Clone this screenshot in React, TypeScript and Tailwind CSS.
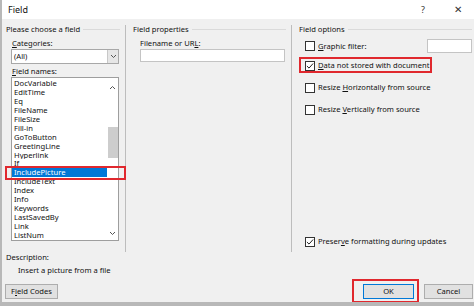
import React from "react";

const items = [
  "DocVariable",
  "EditTime",
  "Eq",
  "FileName",
  "FileSize",
  "Fill-in",
  "GoToButton",
  "GreetingLine",
  "Hyperlink",
  "If",
  "IncludePicture",
  "IncludeText",
  "Index",
  "Info",
  "Keywords",
  "LastSavedBy",
  "Link",
  "ListNum",
];

function Check({ checked }: { checked?: boolean }) {
  return (
    <span className="w-[10px] h-[10px] border border-[#333333] bg-white flex items-center justify-center shrink-0">
      {checked && (
        <svg width="8" height="8" viewBox="0 0 8 8">
          <path d="M0.9 4 L3 6.1 L7.1 1.5" stroke="#222" strokeWidth="1" fill="none" />
        </svg>
      )}
    </span>
  );
}

function Heading({ children }: { children: React.ReactNode }) {
  return (
    <div className="flex items-center h-[9px] gap-[3px]">
      <span className="whitespace-nowrap">{children}</span>
      <div className="flex-1 h-px bg-[#dadada]" />
    </div>
  );
}

function Chevron({ up }: { up?: boolean }) {
  return (
    <svg width="7" height="5" viewBox="0 0 7 5">
      <path
        d={up ? "M1 4 L3.5 1.5 L6 4" : "M1 1 L3.5 3.5 L6 1"}
        stroke="#555"
        strokeWidth="1"
        fill="none"
      />
    </svg>
  );
}

export default function App() {
  return (
    <div className="relative w-[474px] h-[306px] flex flex-col bg-[#f0f0f0] border-l-2 border-b-4 border-[#b8b8b8] font-['Noto_Sans',sans-serif] text-[7.6px] leading-[9px] text-[#111] overflow-hidden">
      {/* title bar */}
      <div className="h-[19px] bg-white flex items-center shrink-0">
        <span className="ml-[6px] text-[9px]">Field</span>
        <div className="flex-1" />
        <span className="text-[9px] text-[#333] mr-[29px]">?</span>
        <span className="text-[10px] text-[#333] mr-[12px]">✕</span>
      </div>

      {/* main columns */}
      <div className="flex mt-[6px] h-[227px] shrink-0">
        {/* column 1 */}
        <div className="w-[124px] border-r border-[#bdbdbd] flex flex-col pl-[4px] pr-[5px]">
          <Heading>Please choose a field</Heading>
          <div className="mt-[5px] ml-[6px]">
            <u>C</u>ategories:
          </div>
          <div className="mt-[1px] ml-[5px] w-[108px] h-[15px] bg-white border border-[#a8a8a8] flex items-center">
            <span className="ml-[2px] flex-1">(All)</span>
            <span className="w-[11px] h-full bg-[#e6e6e6] border-l border-[#c8c8c8] flex items-center justify-center">
              <Chevron />
            </span>
          </div>
          <div className="mt-[3px] ml-[6px]">
            <u>F</u>ield names:
          </div>
          <div className="mt-[1px] ml-[5px] w-[108px] h-[164px] bg-white border border-[#9e9e9e] flex">
            <div className="flex-1 flex flex-col pt-[1px]">
              {items.map((it) => (
                <div
                  key={it}
                  className={
                    "h-[9px] pl-[2px] leading-[9px] overflow-hidden " +
                    (it === "IncludePicture" ? "bg-[#0078d7] text-white" : "")
                  }
                >
                  {it}
                </div>
              ))}
            </div>
            <div className="w-[11px] flex flex-col items-center bg-white">
              <div className="h-[12px] flex items-center justify-center mt-[3px]">
                <Chevron up />
              </div>
              <div className="mt-[34px] w-[10px] h-[31px] bg-[#cdcdcd]" />
              <div className="flex-1" />
              <div className="h-[12px] flex items-center justify-center mb-[1px]">
                <Chevron />
              </div>
            </div>
          </div>
        </div>

        {/* column 2 */}
        <div className="w-[166px] border-r border-[#bdbdbd] flex flex-col pl-[7px] pr-[5px]">
          <Heading>Field properties</Heading>
          <div className="mt-[5px] ml-[7px]">
            Filename or UR<u>L</u>:
          </div>
          <div className="mt-[1px] ml-[7px] w-[145px] h-[13px] bg-white border border-[#c4c4c4]" />
        </div>

        {/* column 3 */}
        <div className="flex-1 flex flex-col pl-[7px] pr-[2px]">
          <Heading>Field options</Heading>
          <div className="mt-[5px] flex items-center h-[14px] ml-[6px]">
            <Check />
            <span className="ml-[3px]">
              <u>G</u>raphic filter:
            </span>
            <div className="flex-1" />
            <div className="w-[45px] h-[14px] bg-white border border-[#c4c4c4]" />
          </div>
          <div className="mt-[8px] flex items-center h-[9px] ml-[6px]">
            <Check checked />
            <span className="ml-[3px]">
              <u>D</u>ata not stored with document
            </span>
          </div>
          <div className="mt-[13px] flex items-center h-[9px] ml-[6px]">
            <Check />
            <span className="ml-[3px]">
              Resize <u>H</u>orizontally from source
            </span>
          </div>
          <div className="mt-[13px] flex items-center h-[9px] ml-[6px]">
            <Check />
            <span className="ml-[3px]">
              Resize <u>V</u>ertically from source
            </span>
          </div>
          <div className="flex-1" />
          <div className="flex items-center h-[9px] ml-[6px] mb-[6px]">
            <Check checked />
            <span className="ml-[3px]">
              Preser<u>v</u>e formatting during updates
            </span>
          </div>
        </div>
      </div>

      {/* description */}
      <div className="mt-[1px] ml-[4px]">Description:</div>
      <div className="mt-[4px] ml-[16px]">Insert a picture from a file</div>

      {/* buttons */}
      <div className="mt-[9px] flex items-center h-[15px]">
        <div className="ml-[3px] w-[53px] h-[15px] bg-[#e1e1e1] border border-[#adadad] flex items-center justify-center">
          F<u>i</u>eld Codes
        </div>
        <div className="flex-1" />
        <div className="w-[51px] h-[15px] bg-[#e1e1e1] border border-[#0078d7] flex items-center justify-center">
          OK
        </div>
        <div className="ml-[10px] mr-[1px] w-[49px] h-[15px] bg-[#e1e1e1] border border-[#adadad] flex items-center justify-center">
          Cancel
        </div>
      </div>

      {/* red annotation boxes */}
      <div className="absolute left-[3px] top-[166px] w-[121px] h-[14px] border-2 border-[#e0282e]" />
      <div className="absolute left-[297px] top-[57px] w-[133px] h-[16px] border-2 border-[#e0282e]" />
      <div className="absolute left-[350px] top-[279px] w-[67px] h-[24px] border-2 border-[#e0282e]" />
    </div>
  );
}
